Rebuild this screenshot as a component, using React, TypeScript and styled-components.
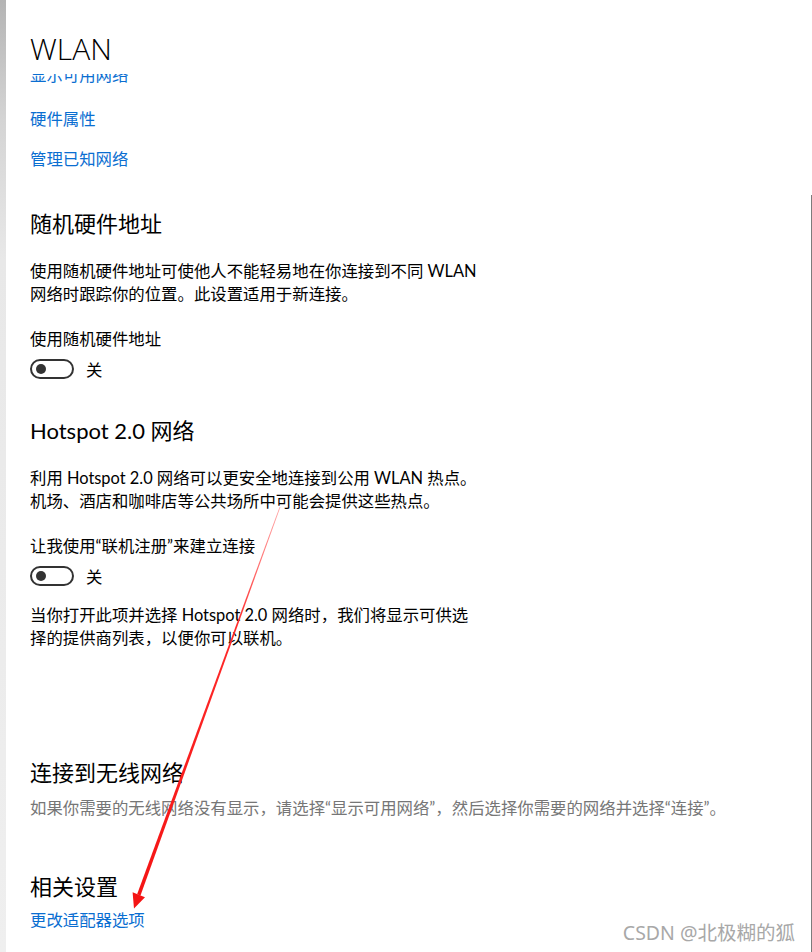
import React from "react";
import styled, { createGlobalStyle } from "styled-components";

const GlobalStyle = createGlobalStyle`
  html, body {
    margin: 0;
    padding: 0;
    background: #ffffff;
  }
  body {
    font-family: "Lato", "Noto Sans CJK SC", sans-serif;
    color: #000000;
  }
`;

const Window = styled.div`
  position: relative;
  display: flex;
  width: 812px;
  height: 952px;
  overflow: hidden;
  background: #ffffff;
`;

const EdgeStrip = styled.div`
  width: 6px;
  flex: 0 0 6px;
  background: linear-gradient(
    to bottom,
    #b4b4b4 0px,
    #d4d4d4 120px,
    #e8e8e8 260px,
    #efefef 100%
  );
`;

const RightRail = styled.div`
  width: 1px;
  flex: 0 0 1px;
  margin-top: 195px;
  background: #7c7c7c;
`;

const Main = styled.main`
  flex: 1;
  display: flex;
  flex-direction: column;
  min-width: 0;
`;

const Header = styled.header`
  height: 74px;
  padding: 28px 0 0 24px;
  box-sizing: border-box;
  flex: 0 0 74px;
`;

const Title = styled.h1`
  margin: 0;
  font-family: "Open Sans", "Noto Sans", sans-serif;
  font-weight: 300;
  font-size: 30px;
  line-height: 42px;
  color: #000;
`;

const Viewport = styled.div`
  flex: 1;
  overflow: hidden;
  padding-left: 24px;
`;

const Content = styled.div`
  margin-top: -11px;
  display: flex;
  flex-direction: column;
  align-items: flex-start;
`;

const Link = styled.a<{ $gap?: number }>`
  display: block;
  font-size: 16.4px;
  line-height: 24px;
  color: #0a6ed1;
  text-decoration: none;
  margin-bottom: ${(p) => p.$gap ?? 16}px;
  cursor: pointer;
`;

const Heading = styled.h2<{ $top: number }>`
  margin: ${(p) => p.$top}px 0 0;
  font-size: 22px;
  font-weight: 400;
  line-height: 30px;
  color: #000;
`;

const Text = styled.p<{ $top: number; $muted?: boolean }>`
  margin: ${(p) => p.$top}px 0 0;
  font-size: 16.4px;
  line-height: 23px;
  color: ${(p) => (p.$muted ? "#767676" : "#000")};
  white-space: nowrap;
`;

const ToggleRow = styled.label`
  display: flex;
  align-items: center;
  gap: 12px;
  margin-top: 9px;
  height: 20px;
  font-size: 16.4px;
  cursor: pointer;
`;

const Track = styled.span<{ $on?: boolean }>`
  position: relative;
  width: 44px;
  height: 20px;
  box-sizing: border-box;
  border: 2px solid #333;
  border-radius: 10px;
  background: ${(p) => (p.$on ? "#0a6ed1" : "#fff")};
`;

const Knob = styled.span<{ $on?: boolean }>`
  position: absolute;
  top: 3px;
  left: ${(p) => (p.$on ? "27px" : "4px")};
  width: 10px;
  height: 10px;
  border-radius: 50%;
  background: ${(p) => (p.$on ? "#fff" : "#333")};
`;

const Watermark = styled.div`
  position: absolute;
  right: 17px;
  bottom: 6px;
  font-family: "Noto Sans", "Noto Sans CJK SC", sans-serif;
  font-size: 19.5px;
  line-height: 26px;
  color: #a8a8a8;
  text-shadow: 0 0 1px #fff;
  pointer-events: none;
`;

const Overlay = styled.svg`
  position: absolute;
  left: 0;
  top: 0;
  pointer-events: none;
`;

const Toggle = ({ label }: { label: string }) => (
  <ToggleRow>
    <Track>
      <Knob />
    </Track>
    <span>{label}</span>
  </ToggleRow>
);

const Arrow = () => (
  <Overlay width={812} height={952} viewBox="0 0 812 952">
    <defs>
      <linearGradient id="shaft" x1="280" y1="507" x2="138" y2="895" gradientUnits="userSpaceOnUse">
        <stop offset="0" stopColor="#ff6b6b" stopOpacity="0.6" />
        <stop offset="0.3" stopColor="#ff2a2a" />
        <stop offset="1" stopColor="#f41414" />
      </linearGradient>
    </defs>
    <polygon points="280.4,507.1 279.6,506.9 137.1,894.2 140.5,895.4" fill="url(#shaft)" />
    <polygon points="134,908.5 132.6,892.2 145,897.2" fill="#f41414" />
  </Overlay>
);

const App = () => {
  return (
    <>
      <GlobalStyle />
      <Window>
        <EdgeStrip />
        <Main>
          <Header>
            <Title>WLAN</Title>
          </Header>
          <Viewport>
            <Content>
              <Link $gap={20}>显示可用网络</Link>
              <Link>硬件属性</Link>
              <Link $gap={0}>管理已知网络</Link>

              <Heading $top={38}>随机硬件地址</Heading>
              <Text $top={20}>
                使用随机硬件地址可使他人不能轻易地在你连接到不同 WLAN
                <br />
                网络时跟踪你的位置。此设置适用于新连接。
              </Text>
              <Text $top={22}>使用随机硬件地址</Text>
              <Toggle label="关" />

              <Heading $top={37}>Hotspot 2.0 网络</Heading>
              <Text $top={20}>
                利用 Hotspot 2.0 网络可以更安全地连接到公用 WLAN 热点。
                <br />
                机场、酒店和咖啡店等公共场所中可能会提供这些热点。
              </Text>
              <Text $top={22}>让我使用“联机注册”来建立连接</Text>
              <Toggle label="关" />
              <Text $top={17}>
                当你打开此项并选择 Hotspot 2.0 网络时，我们将显示可供选
                <br />
                择的提供商列表，以便你可以联机。
              </Text>

              <Heading $top={109}>连接到无线网络</Heading>
              <Text $top={8} $muted>
                如果你需要的无线网络没有显示，请选择“显示可用网络”，然后选择你需要的网络并选择“连接”。
              </Text>

              <Heading $top={53}>相关设置</Heading>
              <Link $gap={0} style={{ marginTop: 6 }}>
                更改适配器选项
              </Link>
            </Content>
          </Viewport>
        </Main>
        <RightRail />
        <Arrow />
        <Watermark>CSDN @北极糊的狐</Watermark>
      </Window>
    </>
  );
};

export default App;
